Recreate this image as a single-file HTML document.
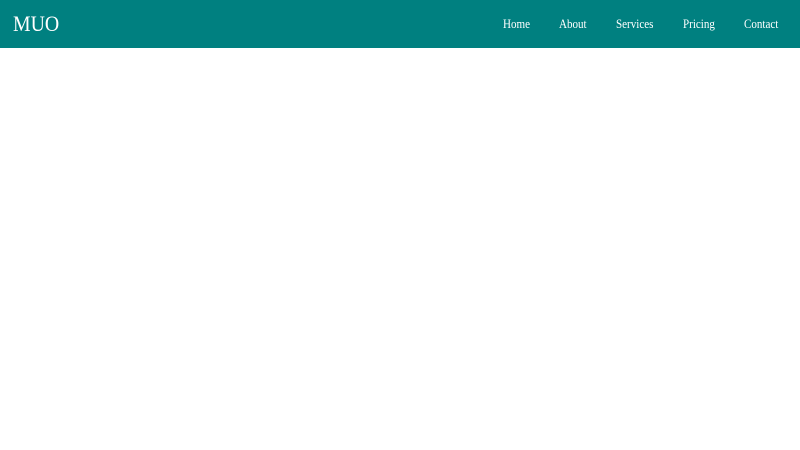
<!DOCTYPE html>
<html><head><style>
body{margin:0;background:#fff;font-family:"Liberation Serif",serif;}
.nav{height:48px;background:#008080;position:relative;color:#fff;}
.logo{position:absolute;left:13px;top:11px;font-size:22px;transform:scaleX(0.9);transform-origin:left;}
.nav a{position:absolute;top:16px;font-size:13px;color:#fff;text-decoration:none;transform:scaleX(0.85);transform-origin:left;}
</style></head><body>
<div class="nav"><span class="logo">MUO</span>
<a style="left:503px">Home</a><a style="left:559px">About</a><a style="left:616px">Services</a><a style="left:683px">Pricing</a><a style="left:744px">Contact</a>
</div></body></html>
